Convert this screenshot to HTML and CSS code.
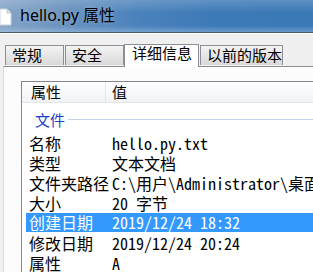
FILE: index.html
```html
<!DOCTYPE html>
<html>
<head>
<meta charset="utf-8">
<link rel="stylesheet" href="styles.css">
</head>
<body>
<div class="window">
  <div class="titlebar">
    <svg class="doc-icon" width="12" height="18" viewBox="0 0 12 18">
      <path d="M0 1 H7 L11 5 V17 H0 Z" fill="#ffffff" stroke="#c9d3dd" stroke-width="1"/>
      <path d="M7 1 V5 H11" fill="#e4e9ee" stroke="#b8c2cc" stroke-width="1"/>
    </svg>
    <span class="title">hello.py 属性</span>
  </div>
  <div class="frame">
    <div class="tabs">
      <div class="tab t1">常规</div>
      <div class="tab t2">安全</div>
      <div class="tab t3 active">详细信息</div>
      <div class="tab t4">以前的版本</div>
    </div>
    <div class="panel">
      <div class="list">
        <div class="head">
          <div class="hcol hname">属性</div>
          <div class="hcol hval">值</div>
        </div>
        <div class="group"><span class="gname">文件</span><span class="gline"></span></div>
        <div class="row"><span class="k">名称</span><span class="v">hello.py.txt</span></div>
        <div class="row"><span class="k">类型</span><span class="v">文本文档</span></div>
        <div class="row"><span class="k">文件夹路径</span><span class="v">C:\用户\Administrator\桌面</span></div>
        <div class="row"><span class="k">大小</span><span class="v">20 字节</span></div>
        <div class="row sel"><span class="k">创建日期</span><span class="v">2019/12/24 18:32</span></div>
        <div class="row"><span class="k">修改日期</span><span class="v">2019/12/24 20:24</span></div>
        <div class="row"><span class="k">属性</span><span class="v">A</span></div>
      </div>
    </div>
  </div>
</div>
</body>
</html>
```
FILE: styles.css
```css
html, body {
  margin: 0;
  padding: 0;
}
body {
  width: 313px;
  height: 272px;
  overflow: hidden;
  background: #f0f0f0;
  font-family: "Noto Sans", "Noto Sans CJK SC", sans-serif;
}
.window {
  width: 313px;
  height: 272px;
  overflow: hidden;
}
.titlebar {
  display: flex;
  align-items: center;
  background:
    linear-gradient(to bottom, rgba(255,255,255,0.18) 0%, rgba(255,255,255,0) 40%, rgba(255,255,255,0) 80%, rgba(190,215,240,0.35) 100%),
    linear-gradient(to right, #87a6c8 0%, #6b93bf 18%, #4a82bb 45%, #3c79b7 70%, #3a78b6 100%);
  border-bottom: 1px solid #4f5d6c;
  box-sizing: border-box;
  height: 33px;
}
.doc-icon {
  margin-left: 0;
  margin-top: 2px;
  flex: none;
}
.title {
  margin-left: 8px;
  font-size: 16px;
  color: #000;
  line-height: 18px;
  padding-bottom: 2px;
  text-shadow: 0 0 4px rgba(255,255,255,0.35);
}
.frame {
  border-top: 1px solid #ffffff;
  background: #f0f0f0;
  height: 238px;
  padding-top: 9px;
}
.tabs {
  display: flex;
  align-items: flex-end;
  height: 23px;
  margin-left: 5px;
  position: relative;
  z-index: 2;
}
.tab {
  box-sizing: border-box;
  height: 20px;
  border: 1px solid #8b8e95;
  border-bottom: none;
  background: linear-gradient(to bottom, #f3f3f3 0%, #e6e6e6 50%, #d9d9d9 100%);
  font-size: 15px;
  line-height: 18px;
  padding-left: 6px;
  color: #000;
  margin-right: 1px;
  font-family: "Noto Sans CJK SC", sans-serif;
  margin-bottom: 1px;
}
.t1 { width: 59px; }
.t2 { width: 59px; margin-right: 0; }
.t3 { width: 75px; }
.t4 { width: 83px; }
.tab.active {
  height: 23px;
  background: #ffffff;
  margin-bottom: -1px;
  line-height: 16px;
  padding-left: 7px;
  margin-right: 1px;
}
.panel {
  margin-left: 3px;
  border-top: 1px solid #8b8e95;
  border-left: 1px solid #d9d9d9;
  background: #fcfcfc;
  height: 220px;
  padding-top: 14px;
  padding-left: 17px;
}
.list {
  border-top: 1px solid #828790;
  border-left: 1px solid #828790;
  background: #ffffff;
  height: 200px;
  font-family: "Noto Sans Mono CJK SC", "Noto Sans CJK SC", monospace;
}
.head {
  display: flex;
  height: 20px;
  background: linear-gradient(to bottom, #ffffff 0%, #f7f8fa 55%, #f1f2f4 100%);
  border-bottom: 1px solid #e3e6ea;
  font-family: "Noto Sans CJK SC", sans-serif;
  font-size: 15px;
  line-height: 20px;
}
.hcol {
  box-sizing: border-box;
}
.hname {
  width: 84px;
  padding-left: 9px;
  border-right: 1px solid #e3e5e8;
}
.hval {
  padding-left: 6px;
}
.group {
  display: flex;
  align-items: center;
  height: 30px;
  padding-top: 3px;
  box-sizing: border-box;
  padding-left: 13px;
}
.gname {
  font-family: "Noto Sans CJK SC", sans-serif;
  font-size: 15px;
  color: #1e3fc4;
  line-height: 16px;
}
.gline {
  flex: 1;
  height: 1px;
  background: #c3d0ea;
  margin-left: 3px;
}
.row {
  display: flex;
  height: 20px;
  line-height: 20px;
  font-size: 16px;
  color: #000;
  margin-left: 4px;
  white-space: nowrap;
}
.row .k {
  width: 80px;
  flex: none;
  padding-left: 3px;
  box-sizing: border-box;
}
.row .v {
  padding-left: 6px;
}
.row.sel {
  background: #3399ff;
  color: #ffffff;
  height: 19px;
  line-height: 19px;
  margin-bottom: 1px;
}
```
